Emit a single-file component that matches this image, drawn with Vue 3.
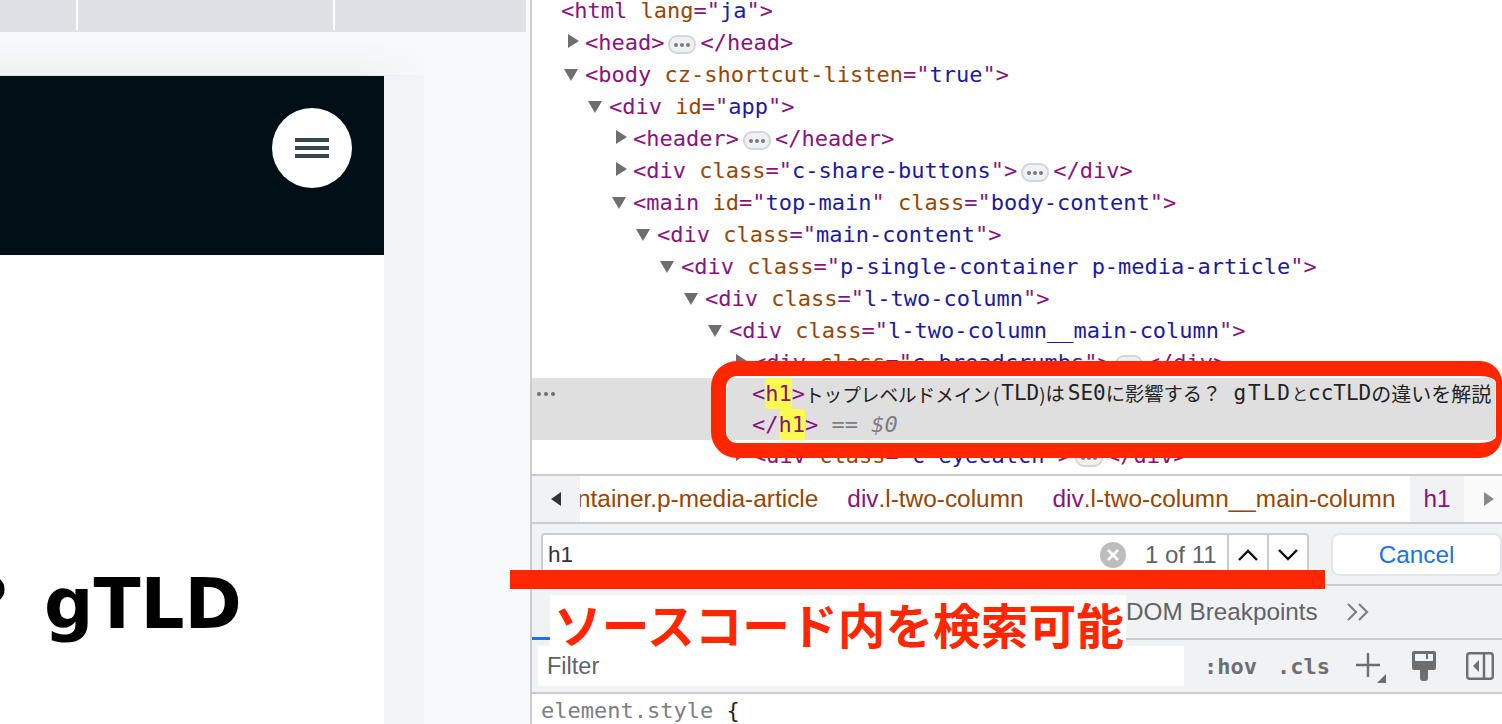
<script setup>
const rows = [
  { x: 561, parts: [['t', '<html '], ['a', 'lang'], ['t', '="'], ['v', 'ja'], ['t', '">']] },
  { x: 585, arrow: 'r', parts: [['t', '<head>']], pill: true, tail: '</head>' },
  { x: 585, arrow: 'd', parts: [['t', '<body '], ['a', 'cz-shortcut-listen'], ['t', '="'], ['v', 'true'], ['t', '">']] },
  { x: 609, arrow: 'd', parts: [['t', '<div '], ['a', 'id'], ['t', '="'], ['v', 'app'], ['t', '">']] },
  { x: 633, arrow: 'r', parts: [['t', '<header>']], pill: true, tail: '</header>' },
  { x: 633, arrow: 'r', parts: [['t', '<div '], ['a', 'class'], ['t', '="'], ['v', 'c-share-buttons'], ['t', '">']], pill: true, tail: '</div>' },
  { x: 633, arrow: 'd', parts: [['t', '<main '], ['a', 'id'], ['t', '="'], ['v', 'top-main'], ['t', '" '], ['a', 'class'], ['t', '="'], ['v', 'body-content'], ['t', '">']] },
  { x: 657, arrow: 'd', parts: [['t', '<div '], ['a', 'class'], ['t', '="'], ['v', 'main-content'], ['t', '">']] },
  { x: 681, arrow: 'd', parts: [['t', '<div '], ['a', 'class'], ['t', '="'], ['v', 'p-single-container p-media-article'], ['t', '">']] },
  { x: 705, arrow: 'd', parts: [['t', '<div '], ['a', 'class'], ['t', '="'], ['v', 'l-two-column'], ['t', '">']] },
  { x: 729, arrow: 'd', parts: [['t', '<div '], ['a', 'class'], ['t', '="'], ['v', 'l-two-column__main-column'], ['t', '">']] },
  { x: 753, arrow: 'r', parts: [['t', '<div '], ['a', 'class'], ['t', '="'], ['v', 'c-breadcrumbs'], ['t', '">']], pill: true, tail: '</div>' },
  { selected: true },
  { x: 753, arrow: 'r', parts: [['t', '<div '], ['a', 'class'], ['t', '="'], ['v', 'c-eyecatch'], ['t', '">']], pill: true, tail: '</div>' }
]
const indent = (x) => ({ paddingLeft: `${x - 532}px` })
</script>

<template>
  <div class="screen">
    <section class="page">
      <div class="tabstrip">
        <div class="seg seg-a"></div>
        <div class="seg seg-b"></div>
        <div class="seg seg-c"></div>
      </div>
      <div class="page-gap"></div>
      <div class="page-body">
        <div class="article">
          <header class="hero">
            <button class="burger"><i></i><i></i><i></i></button>
          </header>
          <h1 class="headline">? gTLD</h1>
        </div>
        <div class="gutter"></div>
      </div>
    </section>

    <section class="devtools">
      <div class="tree">
        <template v-for="(row, i) in rows" :key="i">
          <div v-if="row.selected" class="row-selected">
            <span class="more"><b></b><b></b><b></b></span>
            <div class="sel-line"><span class="t">&lt;</span><mark class="hit t">h1</mark><span class="t">&gt;</span><span class="jp kana">トップレベルドメイン</span><span class="dark paren open">(</span><span class="dark latin">TLD</span><span class="dark paren">)</span><span class="jp ha">は</span><span class="dark latin">SE0</span><span class="jp">に影響する？</span><span class="dark latin gt">gTLD</span><span class="jp to">と</span><span class="dark latin">ccTLD</span><span class="jp last">の違いを解説</span></div>
            <div class="sel-line"><span class="t">&lt;/</span><mark class="hit t">h1</mark><span class="t">&gt;</span><span class="eq"> == </span><em class="dollar">$0</em></div>
          </div>
          <div v-else class="row" :style="indent(row.x)">
            <span v-if="row.arrow" class="arrow" :class="row.arrow"></span>
            <span v-for="(p, j) in row.parts" :key="j" :class="p[0]">{{ p[1] }}</span>
            <span v-if="row.pill" class="pill"><b></b><b></b><b></b></span>
            <span v-if="row.tail" class="t">{{ row.tail }}</span>
          </div>
        </template>
      </div>

      <div class="crumbs">
        <div class="crumb-btn left"><span class="tri-left"></span></div>
        <div class="crumb-list">
          <span class="crumb"><span class="t">div</span><span class="a">.p-single-container.p-media-article</span></span>
          <span class="crumb"><span class="t">div</span><span class="a">.l-two-column</span></span>
          <span class="crumb"><span class="t">div</span><span class="a">.l-two-column__main-column</span></span>
          <span class="crumb current"><span class="t">h1</span></span>
        </div>
        <div class="crumb-btn right"><span class="tri-right"></span></div>
      </div>

      <div class="search">
        <div class="search-box">
          <span class="query">h1</span>
          <svg class="clear" width="26" height="26" viewBox="0 0 26 26"><circle cx="13" cy="13" r="13" fill="#bdbdbd"/><path d="M8 8l10 10M18 8L8 18" stroke="#fff" stroke-width="2.6"/></svg>
          <span class="count">1 of 11</span>
          <span class="step"><svg width="20" height="12" viewBox="0 0 20 12"><path d="M1 11l9-9 9 9" fill="none" stroke="#111" stroke-width="2.4"/></svg></span>
          <span class="step"><svg width="20" height="12" viewBox="0 0 20 12"><path d="M1 1l9 9 9-9" fill="none" stroke="#111" stroke-width="2.4"/></svg></span>
        </div>
        <button class="cancel">Cancel</button>
      </div>

      <div class="tabs">
        <span class="active-tab"></span>
        <span class="tab">DOM Breakpoints</span>
        <svg class="chev" width="24" height="20" viewBox="0 0 24 20"><path d="M2 2l8 8-8 8M13 2l8 8-8 8" fill="none" stroke="#7b7e83" stroke-width="2.2"/></svg>
      </div>

      <div class="filter-bar">
        <div class="filter">Filter</div>
        <span class="tool hov">:hov</span>
        <span class="tool cls">.cls</span>
        <svg class="plus" width="32" height="32" viewBox="0 0 32 32"><path d="M13 1v24M1 13h24" stroke="#6e6e6e" stroke-width="2.4"/><path d="M31 22v9h-9z" fill="#6e6e6e"/></svg>
        <svg class="brush" width="24" height="30" viewBox="0 0 24 30"><path d="M2 0h20a2 2 0 0 1 2 2v15a2 2 0 0 1-2 2h-6v8a3 3 0 0 1-3 3h-2a3 3 0 0 1-3-3v-8H2a2 2 0 0 1-2-2V2a2 2 0 0 1 2-2z" fill="#6e6e6e"/><path d="M3 3h11v5h2V3h5v7H3z" fill="#f1f2f4"/></svg>
        <svg class="side" width="28" height="28" viewBox="0 0 28 28"><rect x="1.2" y="1.2" width="25.6" height="25.6" rx="2.5" fill="none" stroke="#6e6e6e" stroke-width="2.4"/><path d="M18 1v26" stroke="#6e6e6e" stroke-width="2.4"/><path d="M13 8v12l-6-6z" fill="#6e6e6e"/></svg>
      </div>

      <div class="styles"><span class="sel">element.style</span> <span class="brace">{</span></div>
    </section>

    <div class="callout-frame"></div>
    <div class="callout-bar"></div>
    <div class="callout-label">ソースコード内を検索可能</div>
  </div>
</template>

<style>
html, body { margin: 0; background: #fff; }
</style>

<style scoped>
.screen {
  position: relative;
  display: flex;
  width: 1502px;
  height: 724px;
  overflow: hidden;
  background: #fff;
  font-family: "Liberation Sans", Arial, sans-serif;
}
.page {
  display: flex;
  flex-direction: column;
  width: 530px;
  flex: none;
  background: #f8f9fa;
}
.tabstrip {
  display: flex;
  width: 526px;
  height: 32px;
  flex: none;
  background: #e0e1e6;
}
.seg { height: 30px; border-right: 2px solid #fff; }
.seg-a { width: 76px; }
.seg-b { width: 255px; }
.seg-c { flex: 1; border-right: 0; }
.page-gap {
  height: 44px;
  flex: none;
  background:
    linear-gradient(90deg, rgba(248, 249, 250, 0) 68%, #f8f9fa 82%),
    linear-gradient(#f8f9fa 20%, #f1f2f2 97%, #e2e3e3 97%);
}
.page-body { display: flex; flex: 1; min-height: 0; }
.article {
  width: 384px;
  flex: none;
  background: #fff;
  overflow: hidden;
}
.gutter { width: 40px; flex: none; background: #f2f3f5; }
.hero {
  display: flex;
  justify-content: flex-end;
  align-items: flex-start;
  height: 179px;
  padding: 32px 32px 0 0;
  box-sizing: border-box;
  background: #010f17;
}
.burger {
  display: flex;
  flex-direction: column;
  justify-content: center;
  align-items: center;
  gap: 4px;
  width: 80px;
  height: 80px;
  padding: 0;
  border: 0;
  border-radius: 50%;
  background: #fff;
}
.burger i { display: block; width: 34px; height: 4px; background: #37474f; }
.headline {
  margin: 304px 0 0 -31px;
  font-family: "DejaVu Sans", sans-serif;
  font-size: 69px;
  font-weight: 700;
  line-height: 90px;
  word-spacing: 11px;
  color: #000;
  white-space: nowrap;
}

.devtools {
  display: flex;
  flex-direction: column;
  flex: 1;
  min-width: 0;
  border-left: 2px solid #cbcbd0;
}
.tree {
  height: 479px;
  flex: none;
  margin-top: -5px;
  overflow: hidden;
  font-family: "DejaVu Sans Mono", monospace;
  font-size: 22px;
  white-space: pre;
}
.row {
  position: relative;
  display: flex;
  align-items: center;
  height: 32px;
  line-height: 32px;
}
.t { color: #881280; }
.a { color: #994500; }
.v { color: #1a1aa6; }
.arrow { position: absolute; width: 0; height: 0; }
.arrow.r {
  margin-left: -17px;
  margin-top: -5px;
  border-left: 11px solid #6e6e6e;
  border-top: 7px solid transparent;
  border-bottom: 7px solid transparent;
}
.arrow.d {
  margin-left: -21px;
  border-top: 12px solid #6e6e6e;
  border-left: 7px solid transparent;
  border-right: 7px solid transparent;
}
.pill {
  display: inline-flex;
  align-items: center;
  justify-content: center;
  gap: 2px;
  width: 28px;
  height: 19px;
  margin: 3px 4px 0;
  box-sizing: border-box;
  border: 2px solid #d5d6da;
  border-radius: 9px;
  background: #eff0f2;
}
.pill b { width: 4px; height: 4px; border-radius: 50%; background: #7a7a7a; }
.row-selected {
  position: relative;
  height: 62px;
  margin-top: -1px;
  padding-left: 220px;
  box-sizing: border-box;
  background: #dfdfdf;
}
.more {
  position: absolute;
  left: 5px;
  top: 14px;
  display: flex;
  gap: 3px;
}
.more b { width: 4px; height: 4px; border-radius: 50%; background: #6e6e6e; }
.sel-line { display: flex; align-items: center; height: 31px; line-height: 31px; }
.hit { padding: 0; border-radius: 3px; background: #fbfb4f; }
.jp {
  font-family: "Noto Sans CJK JP", sans-serif;
  font-size: 19.3px;
  color: #222;
}
.kana { font-size: 18.6px; }
.last { font-size: 20px; }
.ha { margin-right: 3px; }
.to { font-size: 16px; }
.dark { color: #222; }
.latin { font-size: 21px; }
.paren { font-family: "Noto Sans CJK JP", sans-serif; font-size: 18.6px; }
.paren.open { margin: 0 2px; }
.gt { margin-left: 12px; letter-spacing: 2px; }
.eq { color: #7b7e83; }
.dollar { color: #7b7e83; font-style: italic; }

.crumbs {
  display: flex;
  height: 46px;
  flex: none;
  border-top: 2px solid #cbcbd0;
  border-bottom: 2px solid #cbcbd0;
  font-size: 24.4px;
}
.crumb-btn {
  display: flex;
  align-items: center;
  justify-content: center;
  flex: none;
  background: #f1f2f4;
}
.crumb-btn.left { width: 48px; }
.crumb-btn.right { width: 38px; padding-left: 12px; box-sizing: border-box; background: #fbfbfc; }
.tri-left {
  border-right: 10px solid #333;
  border-top: 7px solid transparent;
  border-bottom: 7px solid transparent;
}
.tri-right {
  border-left: 10px solid #8a8a8a;
  border-top: 7px solid transparent;
  border-bottom: 7px solid transparent;
}
.crumb-list {
  display: flex;
  flex: 1;
  min-width: 0;
  justify-content: flex-end;
  overflow: hidden;
  background: #fff;
}
.crumb {
  display: flex;
  align-items: center;
  flex: none;
  padding: 0 14.5px;
  white-space: nowrap;
}
.crumb.current { width: 54px; justify-content: center; padding: 0; background: #f1f2f4; }

.search {
  display: flex;
  gap: 22px;
  height: 62px;
  flex: none;
  padding: 9px 0 0 9px;
  box-sizing: border-box;
  background: #f1f2f4;
  border-bottom: 2px solid #cbcbd0;
}
.search-box {
  display: flex;
  align-items: center;
  width: 768px;
  height: 43px;
  box-sizing: border-box;
  border: 2px solid #cbcbd0;
  border-radius: 4px;
  background: #fff;
  font-size: 24px;
}
.query { flex: 1; padding-left: 5px; font-size: 22.5px; color: #333; }
.clear { margin-right: 19px; }
.count { width: 82px; color: #5f6368; }
.step {
  display: flex;
  align-items: center;
  justify-content: center;
  width: 38px;
  height: 100%;
  border-left: 2px solid #cbcbd0;
}
.cancel {
  width: 171px;
  height: 43px;
  padding: 0;
  border: 2px solid #e4e5e8;
  border-radius: 8px;
  background: #fff;
  color: #1a73e8;
  font: 24.3px "Liberation Sans", Arial, sans-serif;
}

.tabs {
  position: relative;
  display: flex;
  align-items: center;
  height: 54px;
  flex: none;
  box-sizing: border-box;
  background: #f1f2f4;
  border-bottom: 2px solid #cbcbd0;
  font-size: 24.3px;
  color: #5f6368;
}
.active-tab {
  position: absolute;
  left: 0;
  bottom: -2px;
  width: 20px;
  height: 3px;
  background: #1a73e8;
}
.tab { margin-left: 594px; }
.chev { margin-left: 28px; }

.filter-bar {
  display: flex;
  align-items: center;
  height: 54px;
  flex: none;
  box-sizing: border-box;
  padding: 6px 0 6px 6px;
  background: #f1f2f4;
  border-bottom: 2px solid #cbcbd0;
}
.filter {
  display: flex;
  align-items: center;
  width: 646px;
  height: 40px;
  flex: none;
  padding: 1px 0 0 9px;
  box-sizing: border-box;
  background: #fff;
  font-size: 23.5px;
  color: #5f6368;
}
.tool {
  font-family: "DejaVu Sans Mono", monospace;
  font-size: 22px;
  font-weight: 700;
  color: #6e6e6e;
}
.hov { margin-left: 20px; }
.cls { margin-left: 20px; }
.plus { margin-left: 25px; margin-top: 4px; }
.brush { margin-left: 25px; }
.side { margin-left: 30px; }

.styles {
  padding: 4px 0 0 9px;
  font-family: "DejaVu Sans Mono", monospace;
  font-size: 22px;
  line-height: 26px;
  white-space: pre;
}
.sel { color: #7b7e83; }
.brace { color: #222; }

.callout-frame {
  position: absolute;
  left: 711px;
  top: 361px;
  width: 791px;
  height: 97px;
  box-sizing: border-box;
  border: 15px solid #ff2600;
  border-right-width: 6px;
  border-radius: 26px 22px 22px 26px;
  box-shadow: inset 0 0 0 1px #fff;
}
.callout-bar {
  position: absolute;
  left: 510px;
  top: 570px;
  width: 815px;
  height: 19px;
  background: #ff2600;
}
.callout-label {
  position: absolute;
  left: 550px;
  top: 595px;
  width: 576px;
  height: 51px;
  padding-left: 4px;
  box-sizing: border-box;
  background: #fff;
  font-family: "Noto Sans CJK JP", sans-serif;
  font-size: 47.7px;
  font-weight: 700;
  line-height: 58px;
  color: #ff2600;
  white-space: nowrap;
}
</style>
